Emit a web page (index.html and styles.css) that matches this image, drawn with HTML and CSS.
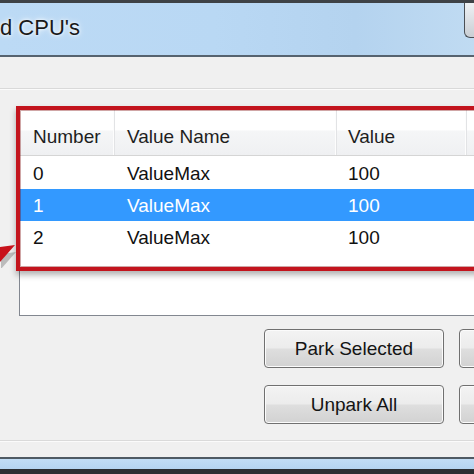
FILE: index.html
```html
<!DOCTYPE html>
<html>
<head>
<meta charset="utf-8">
<link rel="stylesheet" href="styles.css">
</head>
<body>
<div class="window">
  <div class="frame-top"></div>
  <div class="titlebar">
    <span class="title">d CPU's</span>
    <span class="close-btn"></span>
  </div>
  <div class="titlebar-edge"></div>
  <div class="client">
    <div class="menu-band"></div>
    <div class="content">
      <div class="listview-wrap">
        <div class="listview">
          <div class="lv-header">
            <div class="hcell c1">Number</div>
            <div class="hcell c2">Value Name</div>
            <div class="hcell c3">Value</div>
            <div class="hcell c4"></div>
          </div>
          <div class="lv-body">
            <div class="lv-row">
              <div class="cell c1">0</div>
              <div class="cell c2">ValueMax</div>
              <div class="cell c3">100</div>
              <div class="cell c4"></div>
            </div>
            <div class="lv-row selected">
              <div class="cell c1">1</div>
              <div class="cell c2">ValueMax</div>
              <div class="cell c3">100</div>
              <div class="cell c4"></div>
            </div>
            <div class="lv-row">
              <div class="cell c1">2</div>
              <div class="cell c2">ValueMax</div>
              <div class="cell c3">100</div>
              <div class="cell c4"></div>
            </div>
          </div>
        </div>
        <div class="highlight-box"></div>
        <svg class="arrow" width="20" height="26" viewBox="0 0 20 26">
          <polygon points="0,8 15,6 0,23" fill="rgba(0,0,0,0.22)" transform="translate(1,4)"/>
          <polygon points="0,5 15,3 0,20" fill="#c8121b"/>
        </svg>
      </div>
      <div class="buttons">
        <button class="btn">Park Selected</button>
        <button class="btn"></button>
        <button class="btn">Unpark All</button>
        <button class="btn"></button>
      </div>
    </div>
    <div class="status-line"></div>
  </div>
  <div class="frame-bottom">
    <div class="fb-dark"></div>
    <div class="fb-blue"></div>
    <div class="fb-black"></div>
  </div>
</div>
</body>
</html>
```

FILE: styles.css
```css
html, body {
  margin: 0;
  padding: 0;
}
body {
  width: 474px;
  height: 474px;
  overflow: hidden;
  background: #f0f0f0;
  font-family: "Liberation Sans", Arial, sans-serif;
}
.window {
  width: 474px;
  height: 474px;
  display: flex;
  flex-direction: column;
  overflow: hidden;
}
.frame-top {
  height: 3px;
  background: #3e4246;
  flex: none;
}
.titlebar {
  height: 52px;
  flex: none;
  display: flex;
  align-items: flex-start;
  background: linear-gradient(to right, #bcdaf5 0%, #b9d8f4 45%, #b4d3ef 75%, #c0dbf2 100%);
}
.title {
  margin-top: 14px;
  margin-left: 0;
  font-size: 22px;
  line-height: 22px;
  color: #1a1a1a;
  text-shadow: 0 0 6px #ffffff, 0 0 3px #ffffff;
  white-space: nowrap;
}
.close-btn {
  margin-left: auto;
  width: 10px;
  height: 35px;
  box-sizing: border-box;
  border-left: 1px solid #4a4f55;
  border-bottom: 1px solid #4a4f55;
  border-bottom-left-radius: 6px;
  background: linear-gradient(#eef1f4, #c9ced4);
}
.titlebar-edge {
  height: 2px;
  flex: none;
  background: #56636f;
}
.client {
  height: 400px;
  flex: none;
  display: flex;
  flex-direction: column;
  background: #f0f0f0;
  overflow: hidden;
}
.menu-band {
  height: 31px;
  flex: none;
  border-bottom: 1px solid #d9d9d9;
  box-shadow: 0 1px 0 #fbfbfb;
}
.content {
  padding: 20px 0 0 19px;
  flex: none;
}
.listview-wrap {
  position: relative;
  width: 470px;
}
.listview {
  width: 470px;
  height: 207px;
  box-sizing: border-box;
  border: 1px solid #828790;
  background: #ffffff;
  overflow: hidden;
}
.lv-header {
  display: grid;
  grid-template-columns: 95px 222px 130px 1fr;
  height: 46px;
  box-sizing: border-box;
  border-bottom: 1px solid #d5d5d5;
  background: linear-gradient(#ffffff 0%, #ffffff 45%, #f5f6f7 46%, #eff0f2 100%);
}
.hcell {
  padding: 8px 0 0 12px;
  line-height: 37px;
  font-size: 19px;
  color: #1e1e1e;
  border-right: 1px solid #e2e3e5;
  box-shadow: inset -1px 0 0 #fdfdfd;
  white-space: nowrap;
}
.lv-body {
  padding-top: 1px;
}
.lv-row {
  display: grid;
  grid-template-columns: 95px 222px 130px 1fr;
  height: 32px;
}
.cell {
  padding-left: 12px;
  line-height: 34px;
  font-size: 19px;
  color: #111111;
  white-space: nowrap;
}
.c1 {
  padding-left: 13px;
}
.c3 {
  padding-left: 11px;
}
.lv-row.selected {
  background: #3399ff;
}
.lv-row.selected .cell {
  color: #ffffff;
}
.highlight-box {
  position: absolute;
  left: -3px;
  top: -3px;
  width: 490px;
  height: 165px;
  box-sizing: border-box;
  border: 4px solid #c3141d;
  box-shadow: 0 4px 6px rgba(0, 0, 0, 0.3), inset 0 0 0 1px rgba(120, 0, 0, 0.35);
}
.arrow {
  position: absolute;
  left: -19px;
  top: 133px;
}
.buttons {
  display: grid;
  grid-template-columns: 180px 180px;
  column-gap: 15px;
  row-gap: 17px;
  margin-top: 13px;
  margin-left: 245px;
}
.btn {
  height: 39px;
  box-sizing: border-box;
  border: 1px solid #707070;
  border-radius: 4px;
  background: linear-gradient(#f3f3f3 0%, #ececec 48%, #dedede 52%, #d2d2d2 100%);
  box-shadow: inset 0 0 0 1px #fbfbfb;
  font-family: "Liberation Sans", Arial, sans-serif;
  font-size: 19px;
  color: #141414;
  padding: 0;
  white-space: nowrap;
}
.status-line {
  margin-top: auto;
  margin-bottom: 15px;
  height: 0;
  border-top: 1px solid #dadada;
  border-bottom: 1px solid #fbfbfb;
}
.frame-bottom {
  flex: none;
  display: flex;
  flex-direction: column;
}
.fb-dark {
  height: 2px;
  background: #4f5a64;
}
.fb-blue {
  height: 10px;
  background: linear-gradient(#c2ddf5, #b5d4f0);
}
.fb-black {
  height: 5px;
  background: #2c2f32;
}
```
